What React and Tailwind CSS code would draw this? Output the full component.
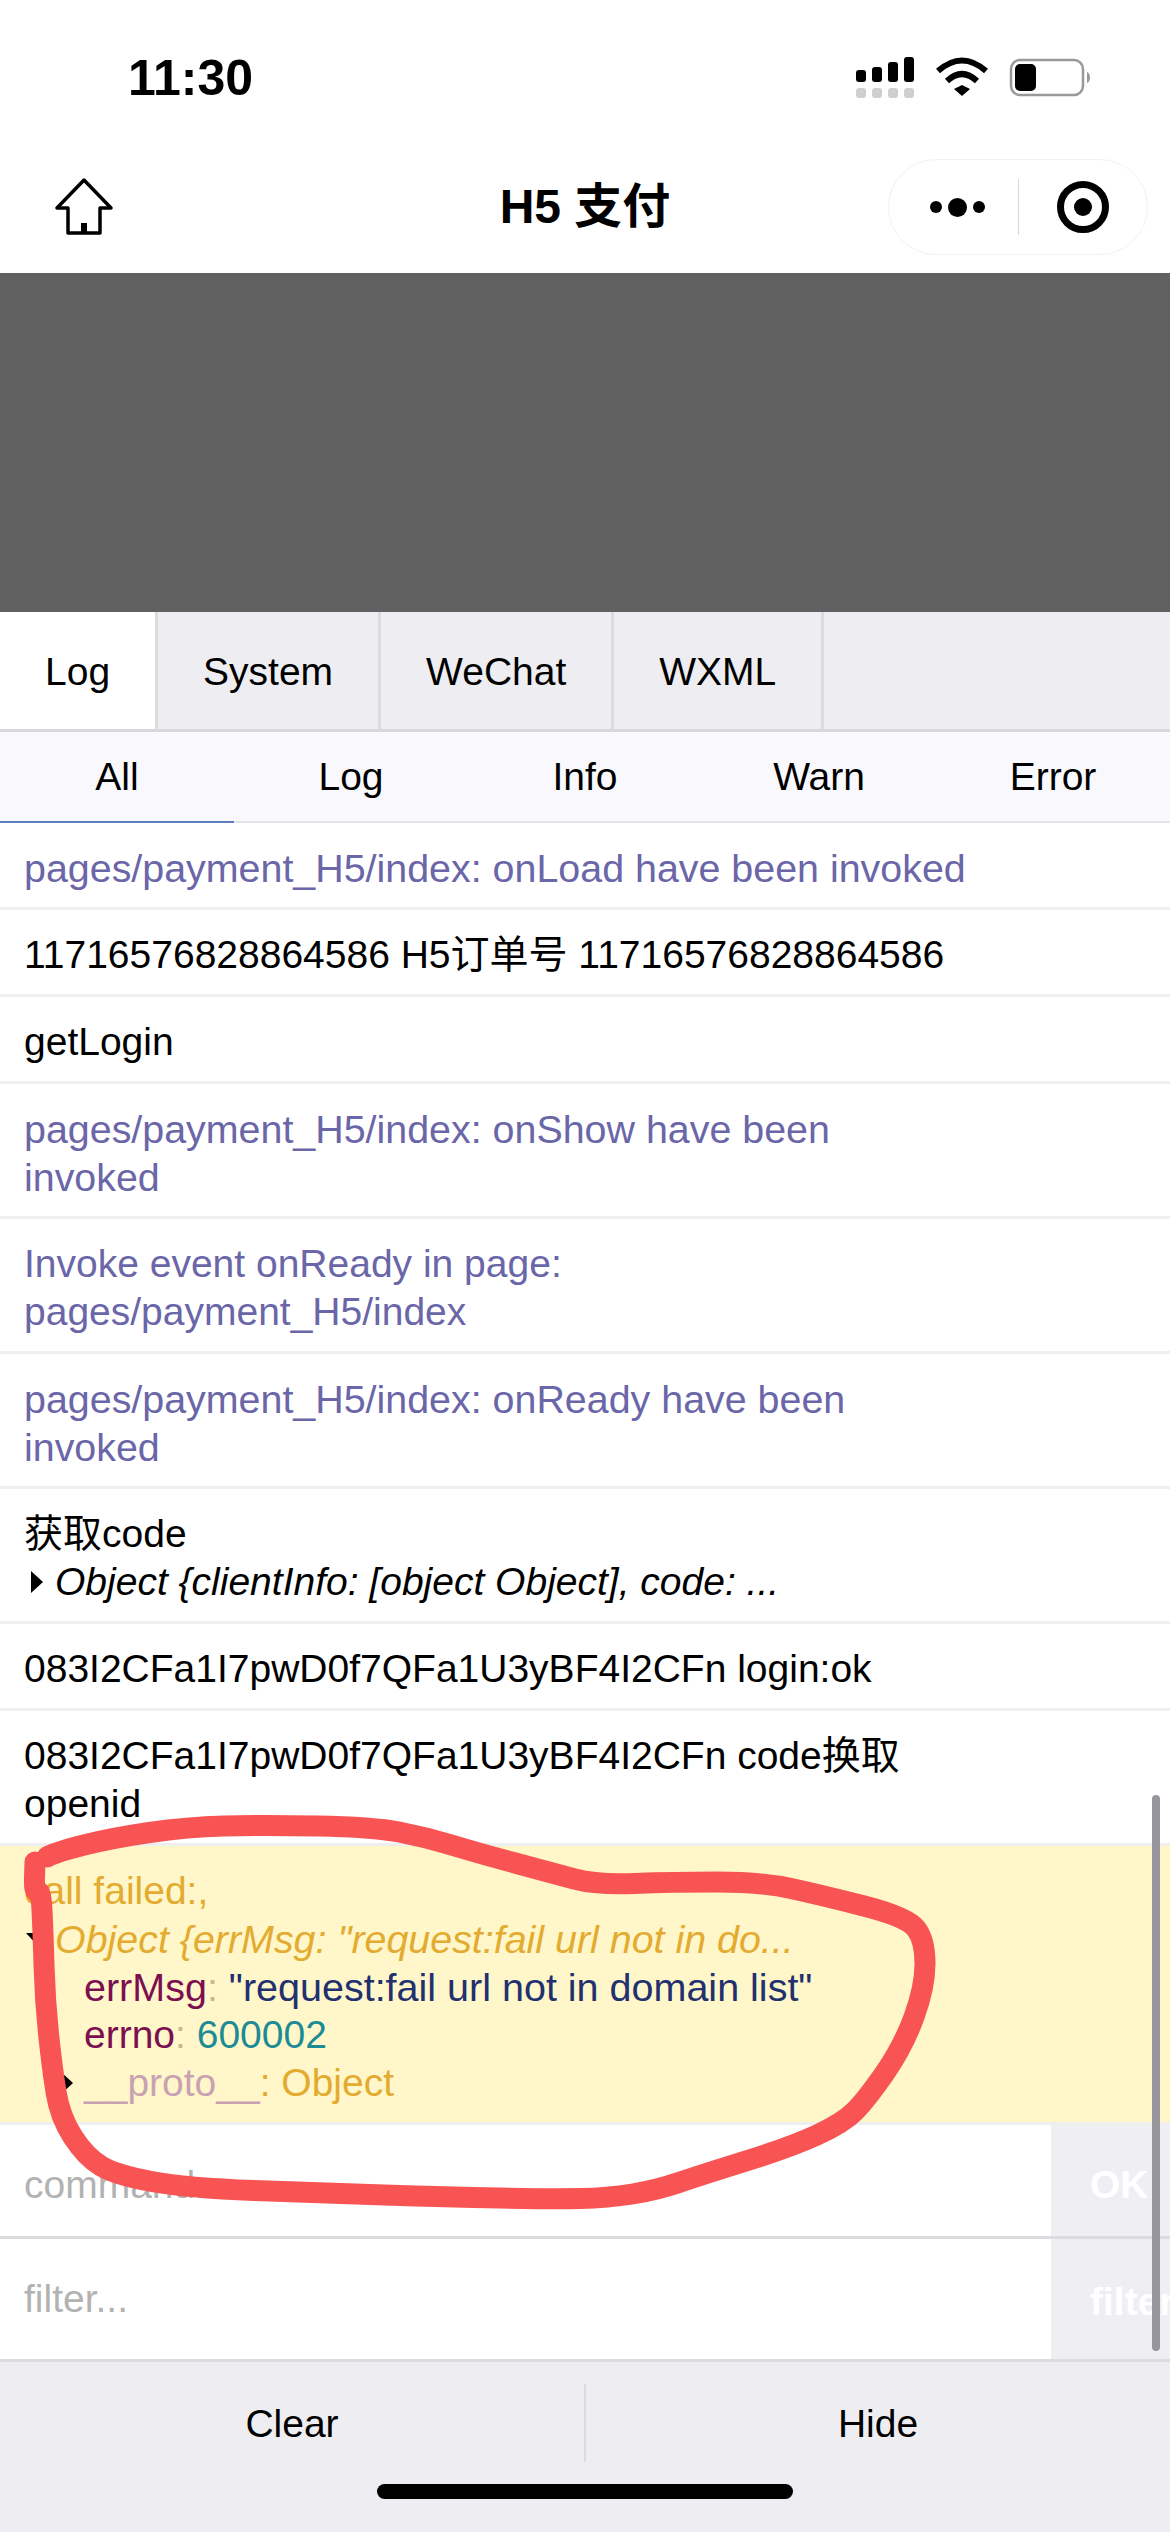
import React from 'react';

const SANS = { fontFamily: '"Liberation Sans", "Noto Sans CJK SC", sans-serif' };

const Triangle = ({ down = false }) => (
  <svg width="14" height="24" viewBox="0 0 14 24" className={down ? 'rotate-90' : ''}>
    <path d="M1 1 L13 12 L1 23 Z" fill="#000" />
  </svg>
);

const StatusIcons = () => (
  <svg width="240" height="60" viewBox="0 0 240 60" className="block">
    <g fill="#000">
      <rect x="0" y="23" width="10" height="12" rx="3" />
      <rect x="16" y="20" width="10" height="15" rx="3" />
      <rect x="32" y="15" width="10" height="20" rx="3" />
      <rect x="48" y="10" width="10" height="25" rx="3" />
    </g>
    <g fill="#cfcfcf">
      <rect x="0" y="41" width="10" height="10" rx="3" />
      <rect x="16" y="41" width="10" height="10" rx="3" />
      <rect x="32" y="41" width="10" height="10" rx="3" />
      <rect x="48" y="41" width="10" height="10" rx="3" />
    </g>
    <path d="M82 24 Q106 3 130 24 M91 34 Q106 20 121 34" fill="none" stroke="#000" strokeWidth="6" />
    <path d="M98 42 L106 38 L114 42 L106 49 Z" fill="#000" />
    <rect x="155" y="13" width="72" height="35" rx="9" fill="none" stroke="#999" strokeWidth="2.5" />
    <rect x="159" y="17" width="21" height="27" rx="5" fill="#000" />
    <path d="M231 25 C235 26 235 35 231 36 Z" fill="#999" />
  </svg>
);

const HomeIcon = () => (
  <svg width="60" height="60" viewBox="0 0 60 60" className="block">
    <path
      d="M30 3 L57 31 L46 31 L46 56 L14 56 L14 31 L3 31 Z"
      fill="none"
      stroke="#000"
      strokeWidth="3.5"
      strokeLinejoin="round"
    />
    <rect x="27" y="46" width="6" height="10" fill="#000" />
  </svg>
);

const Capsule = () => (
  <div className="flex h-[96px] w-[260px] items-center rounded-full border border-[#f2f2f2] bg-white">
    <div className="flex w-[129px] items-center justify-center gap-[6px] pl-[8px]">
      <span className="h-[12px] w-[12px] rounded-full bg-black" />
      <span className="h-[19px] w-[19px] rounded-full bg-black" />
      <span className="h-[12px] w-[12px] rounded-full bg-black" />
    </div>
    <div className="h-[56px] w-px bg-[#d8d8d8]" />
    <div className="flex flex-1 items-center justify-center">
      <div className="flex h-[52px] w-[52px] items-center justify-center rounded-full border-[7px] border-black">
        <span className="h-[18px] w-[18px] rounded-full bg-black" />
      </div>
    </div>
  </div>
);

const tabs = ['Log', 'System', 'WeChat', 'WXML'];
const subTabs = ['All', 'Log', 'Info', 'Warn', 'Error'];

// centre line of the red marker stroke, clockwise from the top left
const scribble = [
  [47, 1857], [56, 1852], [112, 1838], [187, 1827], [261, 1825], [373, 1827], [425, 1837], [478, 1853],
  [552, 1873], [597, 1885], [672, 1882], [761, 1882], [821, 1895], [907, 1917], [925, 1940], [925, 1987],
  [903, 2047], [866, 2100], [843, 2123], [791, 2147], [701, 2175], [657, 2190], [608, 2198], [552, 2199],
  [448, 2197], [321, 2193], [187, 2188], [116, 2175], [86, 2157], [60, 2117], [52, 2067], [45, 2000],
  [43, 1930], [41, 1890], [34, 1893], [35, 1862],
];

const smoothPath = (pts) => {
  let d = `M${pts[0][0]} ${pts[0][1]}`;
  for (let i = 1; i < pts.length - 1; i++) {
    const mx = (pts[i][0] + pts[i + 1][0]) / 2;
    const my = (pts[i][1] + pts[i + 1][1]) / 2;
    d += ` Q${pts[i][0]} ${pts[i][1]} ${mx} ${my}`;
  }
  const last = pts[pts.length - 1];
  return `${d} L${last[0]} ${last[1]}`;
};

const Row = ({ children, className = '' }) => (
  <div className={`border-b-[3px] border-[#efefef] pb-[15px] pl-[24px] pt-[21px] ${className}`}>{children}</div>
);

const App = () => {
  return (
    <div style={SANS} className="relative flex h-[2532px] w-[1170px] flex-col overflow-hidden bg-white text-[39px] leading-[48px] text-black">
      {/* status bar */}
      <div className="flex h-[159px] shrink-0 items-start justify-between pl-[128px] pr-[74px] pt-[48px]">
        <span className="text-[50px] font-bold leading-[60px]">11:30</span>
        <div className="-mt-[1px]">
          <StatusIcons />
        </div>
      </div>

      {/* nav bar */}
      <div className="relative flex h-[114px] shrink-0 items-start justify-between pl-[54px] pr-[22px]">
        <div className="pt-[18px]">
          <HomeIcon />
        </div>
        <span className="absolute left-0 right-0 top-[21px] text-center text-[48px] font-bold leading-[54px]">H5 支付</span>
        <Capsule />
      </div>

      <div className="h-[339px] shrink-0 bg-[#616161]" />

      {/* top tabs */}
      <div className="flex h-[120px] shrink-0 border-b-[3px] border-[#d9d9dc] bg-[#ededf2]">
        {tabs.map((t, i) => (
          <div
            key={t}
            className={`flex items-center border-r-[3px] border-[#dcdcde] px-[45px] pt-[3px] ${i === 0 ? 'bg-white' : ''}`}
          >
            {t}
          </div>
        ))}
      </div>

      {/* level tabs */}
      <div className="grid h-[91px] shrink-0 grid-cols-5 border-b-[2px] border-[#e4e4e6] bg-[#f9f9fd]">
        {subTabs.map((t, i) => (
          <div
            key={t}
            className={`-mb-[2px] flex items-center justify-center border-b-[2px] ${i === 0 ? 'border-[#5b80bd]' : 'border-transparent'}`}
          >
            {t}
          </div>
        ))}
      </div>

      {/* log list */}
      <div className="flex-1">
        <Row className="text-[39.4px] text-[#6a66a8]">pages/payment_H5/index: onLoad have been invoked</Row>
        <Row>11716576828864586 H5订单号 11716576828864586</Row>
        <Row>getLogin</Row>
        <Row className="text-[39.4px] text-[#6a66a8]">
          pages/payment_H5/index: onShow have been
          <br />
          invoked
        </Row>
        <Row className="text-[#6a66a8]">
          Invoke event onReady in page:
          <br />
          pages/payment_H5/index
        </Row>
        <Row className="text-[39.4px] text-[#6a66a8]">
          pages/payment_H5/index: onReady have been
          <br />
          invoked
        </Row>
        <Row>
          <div>获取code</div>
          <div className="flex items-center gap-[11px] pl-[6px] italic">
            <Triangle />
            Object {'{'}clientInfo: [object Object], code: ...
          </div>
        </Row>
        <Row>083I2CFa1I7pwD0f7QFa1U3yBF4I2CFn login:ok</Row>
        <Row>
          083I2CFa1I7pwD0f7QFa1U3yBF4I2CFn code换取
          <br />
          openid
        </Row>
        <Row className="border-[#e3e0c8] bg-[#fff7c9] text-[#e3ab30]">
          <div>call failed:,</div>
          <div className="flex items-center gap-[11px] pl-[6px] text-[39.4px] italic">
            <Triangle down />
            Object {'{'}errMsg: "request:fail url not in do...
          </div>
          <div className="pl-[60px] text-[39.5px]">
            <span className="text-[#7b0f50]">errMsg</span>
            <span className="text-[#c9b98a]">: </span>
            <span className="text-[#22306f]">"request:fail url not in domain list"</span>
          </div>
          <div className="pl-[60px]">
            <span className="text-[#7b0f50]">errno</span>
            <span className="text-[#c9b98a]">: </span>
            <span className="text-[#1d8b96]">600002</span>
          </div>
          <div className="flex items-center">
            <span className="ml-[36px] mr-[10px]">
              <Triangle />
            </span>
            <span className="text-[#c9a2b2]">__proto__</span>
            <span className="whitespace-pre">: Object</span>
          </div>
        </Row>
      </div>

      {/* command + filter */}
      <div className="flex h-[114px] shrink-0 border-b-[3px] border-[#dcdcde] bg-white">
        <div className="flex flex-1 items-center pl-[24px] pt-[8px] text-[#b2b2b2]">command...</div>
        <div className="flex w-[119px] items-center overflow-hidden bg-[#efeff3] pl-[39px] pt-[8px] font-bold text-white">OK</div>
      </div>
      <div className="flex h-[123px] shrink-0 border-b-[3px] border-[#dcdcde] bg-white">
        <div className="flex flex-1 items-center pl-[24px] text-[#b2b2b2]">filter...</div>
        <div className="flex w-[119px] items-center overflow-hidden bg-[#efeff3] pl-[39px] pt-[6px] font-bold text-white">filter</div>
      </div>

      {/* toolbar */}
      <div className="h-[170px] shrink-0 bg-[#ededf2]">
        <div className="flex h-[121px] items-center">
          <div className="flex-1 pt-[2px] text-center">Clear</div>
          <div className="h-[78px] w-[2px] bg-[#dcdcde]" />
          <div className="flex-1 pt-[2px] text-center">Hide</div>
        </div>
        <div className="mx-auto mt-[1px] h-[15px] w-[416px] rounded-full bg-black" />
      </div>

      {/* scroll bar */}
      <div className="absolute left-[1152px] top-[1795px] h-[556px] w-[8px] rounded-full bg-[#96969c]" />

      {/* hand-drawn red circle */}
      <svg className="pointer-events-none absolute left-0 top-0" width="1170" height="2532" viewBox="0 0 1170 2532">
        <path
          d={smoothPath(scribble)}
          fill="none"
          stroke="#f95454"
          strokeWidth="21"
          strokeLinecap="round"
          strokeLinejoin="round"
        />
      </svg>
    </div>
  );
};

export default App;
